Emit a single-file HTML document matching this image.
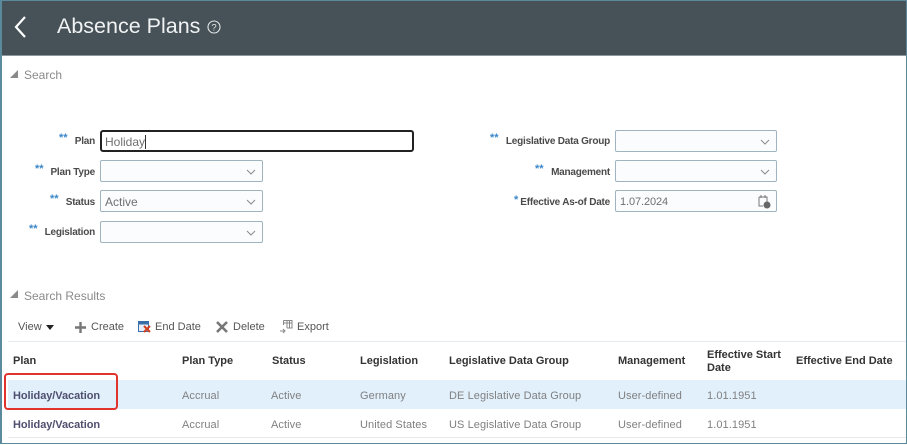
<!DOCTYPE html>
<html><head><meta charset="utf-8">
<style>
html,body{margin:0;padding:0;background:#fff}
#p{position:relative;width:907px;height:445px;overflow:hidden;background:#fff;font-family:"Liberation Sans",sans-serif;font-size:11px;color:#555;filter:blur(0.3px)}
.t{position:absolute;white-space:nowrap;line-height:14px}
.l{position:absolute;white-space:nowrap;line-height:14px;font-weight:bold;font-size:10px;letter-spacing:-0.22px;color:#4a4a4a;text-align:right}
.s{position:absolute;white-space:nowrap;color:#3a86c8;font-weight:bold;font-size:11px;line-height:12px}
.i{position:absolute;box-sizing:border-box;height:22px;border:1px solid #9fb4bf;border-radius:2px;background:#fbfcfd;font-size:12px;color:#707070;line-height:22px;padding-left:4px}
.i svg{position:absolute;right:6px;top:8px}
.h{position:absolute;font-weight:bold;color:#333;font-size:11px;line-height:13px;white-space:nowrap}
.c{position:absolute;font-size:11px;letter-spacing:0.08px;color:#808080;line-height:14px;white-space:nowrap}
.k{position:absolute;font-size:11px;font-weight:bold;letter-spacing:-0.06px;color:#4f4f6f;line-height:14px;white-space:nowrap}
.b{position:absolute;font-size:11px;color:#555;line-height:14px;white-space:nowrap}
</style></head><body><div id="p">
<div style="position:absolute;left:0;top:0;width:907px;height:56px;background:#465257;border-bottom:1px solid #8b979c;box-sizing:border-box"></div>
<svg style="position:absolute;left:13px;top:15px" width="14" height="24"><path d="M12 2L3 12L12 22" fill="none" stroke="#fff" stroke-width="2.2"/></svg>
<div class="t" style="left:57px;top:12px;font-size:21.5px;line-height:28px;color:#f0f2f3">Absence Plans</div>
<svg style="position:absolute;left:207px;top:20px" width="14" height="14"><circle cx="7" cy="7" r="6" fill="none" stroke="#e4e7e8" stroke-width="1.1"/><text x="7" y="10.5" font-size="9.5" font-family="Liberation Sans" fill="#e4e7e8" text-anchor="middle">?</text></svg>

<div style="position:absolute;left:10px;top:70px;border-style:solid;border-width:0 0 8px 8px;border-color:transparent transparent #8a8a8a transparent"></div>
<div class="t" style="left:24px;top:68px;font-size:12px;color:#8a8a8a">Search</div>

<div class="s" style="left:59px;top:132px">**</div><div class="l" style="left:40px;width:55px;top:135px">Plan</div>
<div class="i" style="left:100px;top:130px;width:314px;border:2px solid #222;border-radius:3px;background:#fff;line-height:21px;padding-left:3px;height:22px">Holiday<span style="display:inline-block;width:1px;height:14px;background:#333;vertical-align:-3px"></span></div>

<div class="s" style="left:35px;top:163px">**</div><div class="l" style="left:40px;width:55px;top:166px">Plan Type</div>
<div class="i" style="left:100px;top:160px;width:163px"><svg width="10" height="6"><path d="M1 1L5 5L9 1" fill="none" stroke="#8a8a8a"/></svg></div>

<div class="s" style="left:50px;top:193px">**</div><div class="l" style="left:40px;width:55px;top:196px">Status</div>
<div class="i" style="left:100px;top:190px;width:163px">Active<svg width="10" height="6"><path d="M1 1L5 5L9 1" fill="none" stroke="#8a8a8a"/></svg></div>

<div class="s" style="left:29px;top:223px">**</div><div class="l" style="left:40px;width:55px;top:226px">Legislation</div>
<div class="i" style="left:100px;top:221px;width:163px"><svg width="10" height="6"><path d="M1 1L5 5L9 1" fill="none" stroke="#8a8a8a"/></svg></div>

<div class="s" style="left:490px;top:132px">**</div><div class="l" style="left:480px;width:130px;top:135px">Legislative Data Group</div>
<div class="i" style="left:615px;top:130px;width:162px"><svg width="10" height="6"><path d="M1 1L5 5L9 1" fill="none" stroke="#8a8a8a"/></svg></div>

<div class="s" style="left:535px;top:163px">**</div><div class="l" style="left:480px;width:130px;top:166px">Management</div>
<div class="i" style="left:615px;top:160px;width:162px"><svg width="10" height="6"><path d="M1 1L5 5L9 1" fill="none" stroke="#8a8a8a"/></svg></div>

<div class="s" style="left:514px;top:194px">*</div><div class="l" style="left:480px;width:130px;top:196px">Effective As-of Date</div>
<div class="i" style="left:615px;top:190px;width:162px;font-size:11px;padding-left:4px;letter-spacing:-0.1px">1.07.2024
<svg style="right:5px;top:3px" width="14" height="15"><path d="M2 3H10V8M2 3V12H6M4 1V4M8 1V4" fill="none" stroke="#777"/><circle cx="10" cy="11" r="3.5" fill="#666"/></svg></div>

<div style="position:absolute;left:10px;top:290px;border-style:solid;border-width:0 0 8px 8px;border-color:transparent transparent #8a8a8a transparent"></div>
<div class="t" style="left:24px;top:289px;font-size:12px;color:#8a8a8a">Search Results</div>

<div class="b" style="left:18px;top:320px">View</div>
<div style="position:absolute;left:46px;top:325px;border-style:solid;border-width:5px 4px 0 4px;border-color:#222 transparent transparent transparent"></div>
<svg style="position:absolute;left:75px;top:322px" width="11" height="11"><path d="M5.5 0V11M0 5.5H11" stroke="#777" stroke-width="2.4"/></svg>
<div class="b" style="left:91px;top:320px">Create</div>
<svg style="position:absolute;left:138px;top:320px" width="13" height="13"><rect x="0.5" y="1.5" width="10" height="10" fill="#e8eef5" stroke="#3a6ea8"/><rect x="0.5" y="1.5" width="10" height="3" fill="#3a6ea8"/><path d="M6 6L12 12M12 6L6 12" stroke="#d2401f" stroke-width="2"/></svg>
<div class="b" style="left:155px;top:320px">End Date</div>
<svg style="position:absolute;left:216px;top:321px" width="12" height="12"><path d="M1 1L11 11M11 1L1 11" stroke="#777" stroke-width="2.6"/></svg>
<div class="b" style="left:233px;top:320px">Delete</div>
<svg style="position:absolute;left:279px;top:319px" width="14" height="15"><path d="M4.5 1.5H13V9H8M4.5 1.5V6M4.5 4H13M8 1.5V9M10.500 1.500V9M1 12H6M4 10L6 12L4 14" fill="none" stroke="#888"/></svg>
<div class="b" style="left:297px;top:320px">Export</div>

<div style="position:absolute;left:8px;top:341px;width:899px;height:1px;background:#e4ebf0"></div>

<div class="h" style="left:13px;top:355px">Plan</div>
<div class="h" style="left:182px;top:355px">Plan Type</div>
<div class="h" style="left:272px;top:355px">Status</div>
<div class="h" style="left:360px;top:355px">Legislation</div>
<div class="h" style="left:449px;top:355px">Legislative Data Group</div>
<div class="h" style="left:618px;top:355px">Management</div>
<div class="h" style="left:707px;top:349px">Effective Start<br>Date</div>
<div class="h" style="left:796px;top:355px">Effective End Date</div>

<div style="position:absolute;left:8px;top:380px;width:899px;height:29px;background:#e2f0fc"></div>
<div style="position:absolute;left:8px;top:437px;width:899px;height:1px;background:#e6e9eb"></div>

<div class="k" style="left:13px;top:389px">Holiday/Vacation</div>
<div class="c" style="left:182px;top:389px">Accrual</div>
<div class="c" style="left:271px;top:389px">Active</div>
<div class="c" style="left:360px;top:389px">Germany</div>
<div class="c" style="left:449px;top:389px">DE Legislative Data Group</div>
<div class="c" style="left:618px;top:389px">User-defined</div>
<div class="c" style="left:707px;top:389px">1.01.1951</div>

<div class="k" style="left:13px;top:418px">Holiday/Vacation</div>
<div class="c" style="left:182px;top:418px">Accrual</div>
<div class="c" style="left:271px;top:418px">Active</div>
<div class="c" style="left:360px;top:418px">United States</div>
<div class="c" style="left:449px;top:418px">US Legislative Data Group</div>
<div class="c" style="left:618px;top:418px">User-defined</div>
<div class="c" style="left:707px;top:418px">1.01.1951</div>

<div style="position:absolute;left:4px;top:373px;width:114px;height:37px;box-sizing:border-box;border:2px solid #e0332c;border-radius:4px"></div>

<div style="position:absolute;left:0;top:0;width:907px;height:444px;box-sizing:border-box;border:1px solid #5b8a9c;border-width:1px 1px 1px 2px"></div>
</div></body></html>
